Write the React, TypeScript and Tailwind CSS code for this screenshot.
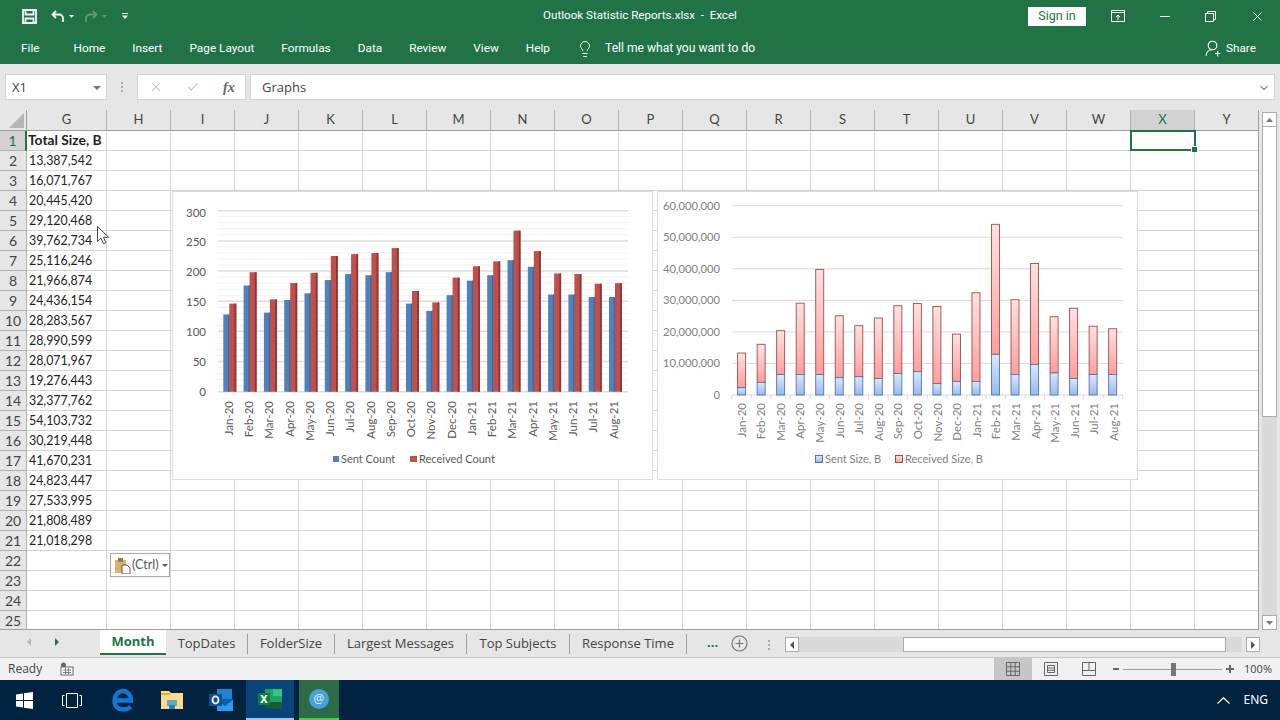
import { Check, ChevronDown, Lightbulb, X } from "lucide-react";

const columns = ["H", "I", "J", "K", "L", "M", "N", "O", "P", "Q", "R", "S", "T", "U", "V", "W", "X", "Y"];

const totals = [
  "13,387,542", "16,071,767", "20,445,420", "29,120,468", "39,762,734", "25,116,246", "21,966,874",
  "24,436,154", "28,283,567", "28,990,599", "28,071,967", "19,276,443", "32,377,762", "54,103,732",
  "30,219,448", "41,670,231", "24,823,447", "27,533,995", "21,808,489", "21,018,298",
];

const months = [
  "Jan-20", "Feb-20", "Mar-20", "Apr-20", "May-20", "Jun-20", "Jul-20", "Aug-20", "Sep-20", "Oct-20",
  "Nov-20", "Dec-20", "Jan-21", "Feb-21", "Mar-21", "Apr-21", "May-21", "Jun-21", "Jul-21", "Aug-21",
];

const sentCount = [128, 176, 131, 152, 163, 185, 195, 193, 198, 146, 134, 160, 184, 193, 218, 207, 161, 161, 157, 157];
const receivedCount = [146, 198, 153, 180, 197, 225, 228, 230, 238, 167, 148, 189, 208, 216, 267, 233, 196, 195, 179, 180];

const sentSize = [2.3, 4, 6.5, 6.5, 6.5, 5.5, 5.8, 5.2, 6.8, 7.4, 3.6, 4.3, 4.3, 12.9, 6.5, 9.7, 7, 5.2, 6.5, 6.5];
const totalSize = [13.3, 16.07, 20.4, 29.1, 39.8, 25.1, 21.97, 24.4, 28.3, 29, 28.07, 19.3, 32.4, 54.1, 30.2, 41.7, 24.8, 27.5, 21.8, 21];

const ribbonTabs = ["Home", "Insert", "Page Layout", "Formulas", "Data", "Review", "View", "Help"];

const sheetTabs = [
  { name: "TopDates", width: "w-[82px]" },
  { name: "FolderSize", width: "w-[87px]" },
  { name: "Largest Messages", width: "w-[132px]" },
  { name: "Top Subjects", width: "w-[103px]" },
  { name: "Response Time", width: "w-[117px]" },
];

const CountChart = () => {
  const y0 = 391.7;
  const scale = 0.6033;
  const minor = Array.from({ length: 31 }, (_, i) => i * 10);

  return (
    <svg viewBox="172 191 481 289" className="absolute left-[172px] top-[81px] h-[289px] w-[481px] bg-white font-['Lato',sans-serif] outline outline-[#dcdcdc] -outline-offset-1">
      {minor.map((v) => (
        <line
          key={v}
          x1={218}
          x2={628}
          y1={y0 - v * scale}
          y2={y0 - v * scale}
          stroke={v % 50 === 0 ? "#dcdcdc" : "#f1f1f1"}
          strokeWidth={v % 50 === 0 ? 1.5 : 1}
        />
      ))}
      {[0, 50, 100, 150, 200, 250, 300].map((v) => (
        <text key={v} x={206} y={y0 - v * 0.597 + 4} textAnchor="end" className="fill-[#595959] text-[11.5px]">
          {v}
        </text>
      ))}
      {months.map((m, i) => {
        const x = 223.3 + i * 20.3;
        const lx = 228.3 + i * 20.26;
        const sh = sentCount[i] * scale;
        const rh = receivedCount[i] * scale;
        return (
          <g key={m}>
            <rect x={x} y={y0 - sh} width={6.5} height={sh} fill="#4f81bd" />
            <rect x={x + 4.8} y={y0 - sh} width={1.7} height={sh} fill="#3d6897" />
            <rect x={x + 6} y={y0 - rh} width={7} height={rh} fill="#c0504d" />
            <rect x={x + 11.2} y={y0 - rh} width={1.8} height={rh} fill="#8a3735" />
            <text
              x={lx}
              y={401}
              textAnchor="end"
              transform={`rotate(-90 ${lx} 401)`}
              dominantBaseline="central"
              className="fill-[#595959] text-[11.5px]"
            >
              {m}
            </text>
          </g>
        );
      })}
      <rect x={333} y={456} width={6} height={6} fill="#4f81bd" />
      <text x={341} y={463} className="fill-[#595959] text-[11px]">Sent Count</text>
      <rect x={410} y={456} width={7} height={6} fill="#c0504d" />
      <text x={419} y={463} className="fill-[#595959] text-[11px]">Received Count</text>
    </svg>
  );
};

const SizeChart = () => {
  const y0 = 395;
  const scale = 189.3 / 60;

  return (
    <svg viewBox="657 191 481 289" className="absolute left-[657px] top-[81px] h-[289px] w-[481px] bg-white font-['Lato',sans-serif] outline outline-[#dcdcdc] -outline-offset-1">
      <defs>
        <linearGradient id="sentFill" x1="0" y1="0" x2="0" y2="1">
          <stop offset="0" stopColor="#dbe8fb" />
          <stop offset="1" stopColor="#96bbec" />
        </linearGradient>
        <linearGradient id="receivedFill" x1="0" y1="0" x2="0" y2="1">
          <stop offset="0" stopColor="#fde2e2" />
          <stop offset="1" stopColor="#ff9f9d" />
        </linearGradient>
      </defs>
      {[0, 10, 20, 30, 40, 50, 60].map((v) => (
        <g key={v}>
          <line x1={732} x2={1123} y1={y0 - v * scale} y2={y0 - v * scale} stroke="#d9d9d9" strokeWidth={1} />
          <text x={720} y={y0 - v * scale + 4} textAnchor="end" className="fill-[#7f7f7f] text-[11.2px]">
            {v === 0 ? "0" : `${v},000,000`}
          </text>
        </g>
      ))}
      {Array.from({ length: 21 }, (_, i) => (
        <line key={i} x1={731.7 + i * 19.55} x2={731.7 + i * 19.55} y1={395} y2={399} stroke="#d9d9d9" />
      ))}
      {months.map((m, i) => {
        const x = 737.6 + i * 19.53;
        const lx = 741 + i * 19.6;
        const sh = sentSize[i] * scale;
        const th = totalSize[i] * scale;
        return (
          <g key={m}>
            <rect x={x} y={y0 - th} width={8} height={th - sh} fill="url(#receivedFill)" stroke="#a04c4c" strokeWidth={0.9} />
            <rect x={x} y={y0 - sh} width={8} height={sh} fill="url(#sentFill)" stroke="#4f75ab" strokeWidth={0.9} />
            <text
              x={lx}
              y={403}
              textAnchor="end"
              transform={`rotate(-90 ${lx} 403)`}
              dominantBaseline="central"
              className="fill-[#7f7f7f] text-[11.5px]"
            >
              {m}
            </text>
          </g>
        );
      })}
      <rect x={815.5} y={455.5} width={7} height={7} fill="url(#sentFill)" stroke="#4f75ab" />
      <text x={825} y={463} className="fill-[#7f7f7f] text-[11px]">Sent Size, B</text>
      <rect x={895.5} y={455.5} width={7} height={7} fill="url(#receivedFill)" stroke="#a04c4c" />
      <text x={905} y={463} className="fill-[#7f7f7f] text-[11px]">Received Size, B</text>
    </svg>
  );
};

const TitleBar = () => (
  <div className="grid h-8 grid-cols-[1fr_auto_1fr] items-center bg-[#217346] font-['Roboto',sans-serif] text-white">
    <div className="flex items-center pl-[22px]">
      <svg width="15" height="15" viewBox="0 0 15 15" fill="none" stroke="#f2f7f4" strokeWidth="1.8">
        <path d="M1 1h13v13H1z" />
        <path d="M3.500 1v4.500h8V1M3.500 14V9.500h8V14" />
      </svg>
      <svg width="14" height="13" viewBox="0 0 14 13" fill="none" stroke="#f2f7f4" strokeWidth="1.8" className="ml-[14px]">
        <path d="M5 1 1.500 4.500 5 8M1.500 4.500H8a4 4 0 0 1 4 4V12" />
      </svg>
      <svg width="5" height="3" viewBox="0 0 5 3" className="ml-[4px]"><path d="M0 0h5L2.500 3z" fill="#f2f7f4" /></svg>
      <svg width="14" height="13" viewBox="0 0 14 13" fill="none" stroke="#5d9a7c" strokeWidth="1.8" className="ml-[10px]">
        <path d="M9 1l3.500 3.500L9 8M12.500 4.500H6a4 4 0 0 0-4 4V12" />
      </svg>
      <svg width="5" height="3" viewBox="0 0 5 3" className="ml-[4px]"><path d="M0 0h5L2.500 3z" fill="#5d9a7c" /></svg>
      <svg width="6" height="6" viewBox="0 0 6 6" className="ml-[15px]">
        <path d="M0 0h6v1H0zM0 2.500h6L3 6z" fill="#f2f7f4" />
      </svg>
    </div>
    <div className="text-[11.6px]">Outlook Statistic Reports.xlsx&nbsp; -&nbsp; Excel</div>
    <div className="flex items-center justify-end">
      <div className="flex h-[19px] w-[58px] items-center justify-center bg-white text-[12.5px] text-[#217346]">Sign in</div>
      <svg width="14" height="12" viewBox="0 0 14 12" fill="none" stroke="#fff" className="ml-[25px]">
        <path d="M.5.500h13v11H.5zM.5 2.500h13M7 10V5M5 7l2-2 2 2" />
      </svg>
      <div className="ml-[35px] h-px w-[10px] bg-white" />
      <svg width="11" height="11" viewBox="0 0 11 11" fill="none" stroke="#fff" className="ml-[35px]">
        <path d="M.5 2.500h8v8h-8zM2.500 2.500v-2h8v8h-2" />
      </svg>
      <X size={15} strokeWidth={1.4} className="ml-[34px] mr-[15px]" />
    </div>
  </div>
);

const RibbonTabs = () => (
  <div className="flex h-8 items-center bg-[#217346] pt-[1px] font-['Roboto',sans-serif] text-[11.8px] text-white">
    <span className="ml-[21px] mr-[34px]">File</span>
    <div className="flex gap-[27px]">
      {ribbonTabs.map((t) => (
        <span key={t}>{t}</span>
      ))}
    </div>
    <Lightbulb size={18} strokeWidth={1.2} className="ml-[26px]" />
    <span className="ml-[11px] text-[12.1px]">Tell me what you want to do</span>
    <div className="ml-auto mr-[24px] flex items-center gap-[5px]">
      <svg width="16" height="17" viewBox="0 0 16 17" fill="none" stroke="#fff" strokeWidth="1.100">
        <circle cx="7.500" cy="5.500" r="4.300" />
        <path d="M1 16c0-3.500 2.500-6 5.500-6.300M10 13.500h5.500M12.700 11v5.500" />
      </svg>
      <span>Share</span>
    </div>
  </div>
);

const FormulaBar = () => (
  <div className="flex h-[46px] items-center bg-[#e6e6e6] pl-[5px] text-[13px] text-[#444]">
    <div className="flex h-[26px] w-[102px] items-center justify-between border border-[#d4d4d4] bg-white pl-[6px] pr-[5px] pt-[1px]">
      <span>X1</span>
      <svg width="8" height="4" viewBox="0 0 8 4"><path d="M0 0h8L4 4z" fill="#777" /></svg>
    </div>
    <div className="mx-[14px] flex flex-col gap-[2px]">
      <div className="h-[2px] w-[2px] bg-[#aaa]" />
      <div className="h-[2px] w-[2px] bg-[#aaa]" />
      <div className="h-[2px] w-[2px] bg-[#aaa]" />
    </div>
    <div className="flex h-[26px] w-[109px] items-center border border-[#d4d4d4] bg-white pl-[11px]">
      <X size={14} strokeWidth={1.800} className="text-[#bdbdbd]" />
      <Check size={14} strokeWidth={1.800} className="ml-[23px] text-[#bdbdbd]" />
      <span className="ml-[23px] font-['Liberation_Serif',serif] text-[14px] font-bold italic text-[#666]">fx</span>
    </div>
    <div className="ml-[4px] flex h-[26px] w-[1025px] items-center justify-between border border-[#d4d4d4] bg-white pl-[11px] pr-[4px] pt-[1px]">
      <span>Graphs</span>
      <ChevronDown size={12} strokeWidth={2.500} className="text-[#8a8a8a]" />
    </div>
  </div>
);

const PasteButton = () => (
  <div className="absolute left-[110px] top-[443px] flex h-[24px] w-[60px] items-center border border-[#a9a9a9] bg-white pl-[3px] text-[12.500px] text-[#555]">
    <svg width="17" height="17" viewBox="0 0 17 17">
      <rect x="1" y="3" width="11" height="13" fill="#d9b36c" />
      <rect x="4" y="1" width="5" height="4" fill="#8f7a55" />
      <path d="M8 8h5l3 3v6H8z" fill="#fff" stroke="#555" />
    </svg>
    <span className="ml-[1px]">(Ctrl)</span>
    <svg width="6" height="3" viewBox="0 0 6 3" className="ml-[3px]"><path d="M0 0h6L3 3z" fill="#555" /></svg>
  </div>
);

const Sheet = () => (
  <div className="relative flex h-[520px] bg-[#e6e6e6] font-['Lato',sans-serif]">
    <div className="h-[520px] w-[1259px] overflow-hidden border-b border-r border-[#9e9e9e]">
      <div className="grid grid-cols-[27px_80px_repeat(18,64px)] grid-rows-[21px_repeat(25,20px)] text-[13px] text-[#222]">
        <div className="flex items-end justify-end border-b border-r border-[#9e9e9e] p-[2px]">
          <div className="h-0 w-0 border-b-[15px] border-l-[15px] border-b-[#b5b5b5] border-l-transparent" />
        </div>
        <div className="flex items-center justify-center border-b border-r border-[#b1b1b1] border-b-[#9e9e9e] text-[#444]">G</div>
        {columns.map((c) => (
          <div
            key={c}
            className={
              c === "X"
                ? "flex items-center justify-center border-b border-r border-[#b1b1b1] border-b-[#217346] bg-[#d2d2d2] text-[#217346]"
                : "flex items-center justify-center border-b border-r border-[#b1b1b1] border-b-[#9e9e9e] text-[#444]"
            }
          >
            {c}
          </div>
        ))}
        {Array.from({ length: 25 }, (_, r) => (
          <div key={r} className="contents">
            <div
              className={
                r === 0
                  ? "flex items-center justify-center border-b border-r-2 border-b-[#b1b1b1] border-r-[#217346] bg-[#d2d2d2] text-[14px] text-[#217346]"
                  : "flex items-center justify-center border-b border-r border-[#b1b1b1] text-[14px] text-[#444]"
              }
            >
              {r + 1}
            </div>
            <div className={r === 0 ? "flex items-center border-b border-r border-[#d4d4d4] bg-white pl-[2px]" : "flex items-center border-b border-r border-[#d4d4d4] bg-white pl-[2px] pt-[1px] text-[12.4px]"}>
              {r === 0 ? <span className="ml-[-1px] text-[13.8px] font-bold">Total Size, B</span> : totals[r - 1]}
            </div>
            {columns.map((c) => (
              <div key={c} className="relative border-b border-r border-[#d4d4d4] bg-white">
                {r === 0 && c === "X" && (
                  <div className="absolute -left-px -top-px z-10 h-[21px] w-[66px] border-2 border-[#217346]">
                    <div className="absolute -bottom-[4px] -right-[4px] h-[7px] w-[7px] border border-white bg-[#217346]" />
                  </div>
                )}
              </div>
            ))}
          </div>
        ))}
      </div>
    </div>
    <div className="flex w-[21px] flex-col items-center pt-[2px]">
      <div className="flex h-[15px] w-[15px] items-center justify-center border border-[#ababab] bg-white">
        <svg width="7" height="4" viewBox="0 0 7 4"><path d="M3.500 0 7 4H0z" fill="#777" /></svg>
      </div>
      <div className="h-[290px] w-[15px] border border-t-0 border-[#ababab] bg-white" />
      <div className="w-[15px] flex-1 bg-[#dadada]" />
      <div className="flex h-[15px] w-[15px] items-center justify-center border border-[#ababab] bg-white">
        <svg width="7" height="4" viewBox="0 0 7 4"><path d="M0 0h7L3.500 4z" fill="#777" /></svg>
      </div>
    </div>
    <CountChart />
    <SizeChart />
    <PasteButton />
    <svg width="12" height="19" viewBox="0 0 12 19" className="absolute left-[97px] top-[116px]">
      <path d="M.5.500v15l3.500-3.400 2.400 5.600 2.500-1-2.400-5.500h5z" fill="#fff" stroke="#333" strokeWidth="0.900" />
    </svg>
  </div>
);

const SheetTabs = () => (
  <div className="flex h-[28px] border-b border-[#c6c6c6] bg-[#e6e6e6] text-[13px] text-[#444]">
    <div className="flex w-[100px] items-center pb-[3px] pl-[27px]">
      <svg width="4" height="8" viewBox="0 0 4 8"><path d="M4 0v8L0 4z" fill="#b5b5b5" /></svg>
      <svg width="4" height="8" viewBox="0 0 4 8" className="ml-[24px]"><path d="M0 0v8l4-4z" fill="#217346" /></svg>
    </div>
    <div className="flex h-[25px] w-[66px] items-center justify-center border-b-2 border-[#217346] bg-white font-bold text-[#217346]">Month</div>
    {sheetTabs.map((t) => (
      <div key={t.name} className={`${t.width} my-[4px] flex h-[20px] items-center justify-center border-r border-[#9e9e9e]`}>
        {t.name}
      </div>
    ))}
    <span className="ml-[20px] mt-[2px] font-bold leading-[20px] text-[#217346]">...</span>
    <svg width="17" height="17" viewBox="0 0 17 17" fill="none" stroke="#777" strokeWidth="1.200" className="ml-[13px] mt-[5px]">
      <circle cx="8.500" cy="8.500" r="7.500" />
      <path d="M8.500 4.500v8M4.500 8.500h8" />
    </svg>
    <div className="ml-[20px] mt-[10px] flex h-[12px] flex-col gap-[2px]">
      <div className="h-[2px] w-[2px] bg-[#aaa]" />
      <div className="h-[2px] w-[2px] bg-[#aaa]" />
      <div className="h-[2px] w-[2px] bg-[#aaa]" />
    </div>
    <div className="ml-[15px] mt-[7px] flex h-[15px] w-[475px]">
      <div className="flex w-[14px] items-center justify-center border border-[#ababab] bg-white">
        <svg width="4" height="8" viewBox="0 0 4 8"><path d="M4 0v8L0 4z" fill="#555" /></svg>
      </div>
      <div className="w-[104px] bg-[#dadada]" />
      <div className="w-[325px] border border-[#ababab] bg-white" />
      <div className="w-[16px] bg-[#dadada]" />
      <div className="ml-[4px] flex w-[14px] items-center justify-center border border-[#ababab] bg-white">
        <svg width="4" height="8" viewBox="0 0 4 8"><path d="M0 0v8l4-4z" fill="#555" /></svg>
      </div>
    </div>
  </div>
);

const StatusBar = () => (
  <div className="flex h-[22px] items-center bg-[#f1f1f1] pl-[8px] text-[12px] text-[#444]">
    <span>Ready</span>
    <svg width="14" height="14" viewBox="0 0 14 14" className="ml-[18px]">
      <circle cx="3.500" cy="3" r="2.500" fill="#666" />
      <rect x="1" y="5" width="12" height="8" fill="#fff" stroke="#666" />
      <path d="M3 8h8M3 10.500h8M5.500 6v6M8.500 6v6" stroke="#666" strokeWidth="0.800" />
    </svg>
    <div className="ml-auto flex h-full items-center">
      <div className="flex h-full w-[38px] items-center justify-center bg-[#c6c6c6]">
        <svg width="14" height="14" viewBox="0 0 14 14" fill="none" stroke="#666">
          <path d="M.5.500h13v13H.5zM.5 4.800h13M.5 9.200h13M4.800.5v13M9.200.5v13" />
        </svg>
      </div>
      <svg width="14" height="14" viewBox="0 0 14 14" fill="none" stroke="#666" className="ml-[12px]">
        <path d="M.5.500h13v13H.5zM3.500 3.500h7v7h-7zM3.500 6h7M3.500 8.300h7" />
      </svg>
      <svg width="14" height="14" viewBox="0 0 14 14" fill="none" stroke="#666" className="ml-[24px]">
        <path d="M.5.500h13v13H.5zM7 .5v8H.5M7 8.500h6.500" />
      </svg>
      <div className="ml-[17px] h-[2px] w-[6px] bg-[#666]" />
      <div className="relative ml-[4px] h-px w-[99px] bg-[#9a9a9a]">
        <div className="absolute left-[48px] top-[-6px] h-[13px] w-[5px] bg-[#777]" />
      </div>
      <svg width="8" height="8" viewBox="0 0 8 8" className="ml-[4px]"><path d="M3 0h2v3h3v2H5v3H3V5H0V3h3z" fill="#666" /></svg>
      <span className="ml-[10px] mr-[8px] text-[11px]">100%</span>
    </div>
  </div>
);

const Taskbar = () => (
  <div className="flex h-10 items-center bg-[#02233f] font-['Noto_Sans',sans-serif] text-white">
    <svg width="17" height="17" viewBox="0 0 17 17" className="ml-[16px]" fill="#fff">
      <path d="M0 2.400 7 1.400v6.600H0zM8 1.300 17 0v8H8zM0 9h7v6.600l-7-1zM8 9h9v8l-9-1.300z" />
    </svg>
    <svg width="20" height="15" viewBox="0 0 20 15" fill="none" stroke="#fff" className="ml-[29px]">
      <path d="M4.500.500h11v14h-11zM2.500 2.500h-2v10h2M17.500 2.500h2v10h-2" />
    </svg>
    <svg width="22" height="24" viewBox="0 0 22 24" fill="none" stroke="#0f78d4" strokeWidth="4.500" className="ml-[30px]">
      <path d="M3 12.500h16C19 7 15.500 3 11 3 6 3 2.500 7.500 2.500 13c0 5.500 4 8.500 8.500 8.500 3.500 0 6-1 8-2.500" />
    </svg>
    <svg width="22" height="20" viewBox="0 0 22 20" className="ml-[27px]">
      <path d="M0 1h8l2 2h12v16H0z" fill="#f7dc8a" />
      <path d="M0 3h9l1 2H0z" fill="#d8b355" />
      <rect x="6" y="10" width="10" height="6" fill="#5fa9c9" />
      <rect x="8" y="15" width="6" height="4" fill="#2f7fae" />
    </svg>
    <svg width="24" height="24" viewBox="0 0 24 24" className="ml-[26px]">
      <rect x="8" y="1" width="15" height="12" fill="#1a86d8" />
      <path d="M8 11h16v12H8z" fill="#0f5fa8" />
      <path d="M8 12l8 6 8-6v11H8z" fill="#2d9be8" />
      <rect x="0" y="6" width="13" height="12" fill="#0c5296" />
      <ellipse cx="6.500" cy="12" rx="3" ry="3.600" fill="none" stroke="#fff" strokeWidth="1.800" />
    </svg>
    <div className="ml-[13px] flex h-full w-[48px] items-center justify-center border-b-2 border-[#99c9f5] bg-[#0a4377]">
      <svg width="24" height="20" viewBox="0 0 24 20">
        <rect x="7" y="0" width="17" height="20" fill="#21a366" />
        <rect x="15" y="0" width="9" height="7" fill="#33c481" />
        <rect x="7" y="13" width="17" height="7" fill="#185c37" />
        <rect x="0" y="4" width="12" height="12" fill="#107c41" />
        <text x="6" y="14" textAnchor="middle" fill="#fff" fontSize="11" fontWeight="700">X</text>
      </svg>
    </div>
    <div className="ml-[5px] flex h-full w-[40px] items-center justify-center border-b-2 border-[#3bd24a] bg-[#2d6b46]">
      <div className="flex h-[20px] w-[20px] items-center justify-center rounded-full bg-[#4aa0da] pb-[1px] text-[12px] leading-none text-[#d8eefc]">@</div>
    </div>
    <svg width="13" height="7" viewBox="0 0 13 7" fill="none" stroke="#fff" strokeWidth="1.200" className="ml-auto">
      <path d="M.5 6.500 6.500.700l6 5.800" />
    </svg>
    <span className="ml-[13px] mr-[12px] text-[12px]">ENG</span>
  </div>
);

const App = () => {
  return (
    <div className="flex h-[720px] w-[1280px] flex-col overflow-hidden font-['Open_Sans',sans-serif]">
      <TitleBar />
      <RibbonTabs />
      <FormulaBar />
      <Sheet />
      <SheetTabs />
      <StatusBar />
      <Taskbar />
    </div>
  );
};

export default App;
